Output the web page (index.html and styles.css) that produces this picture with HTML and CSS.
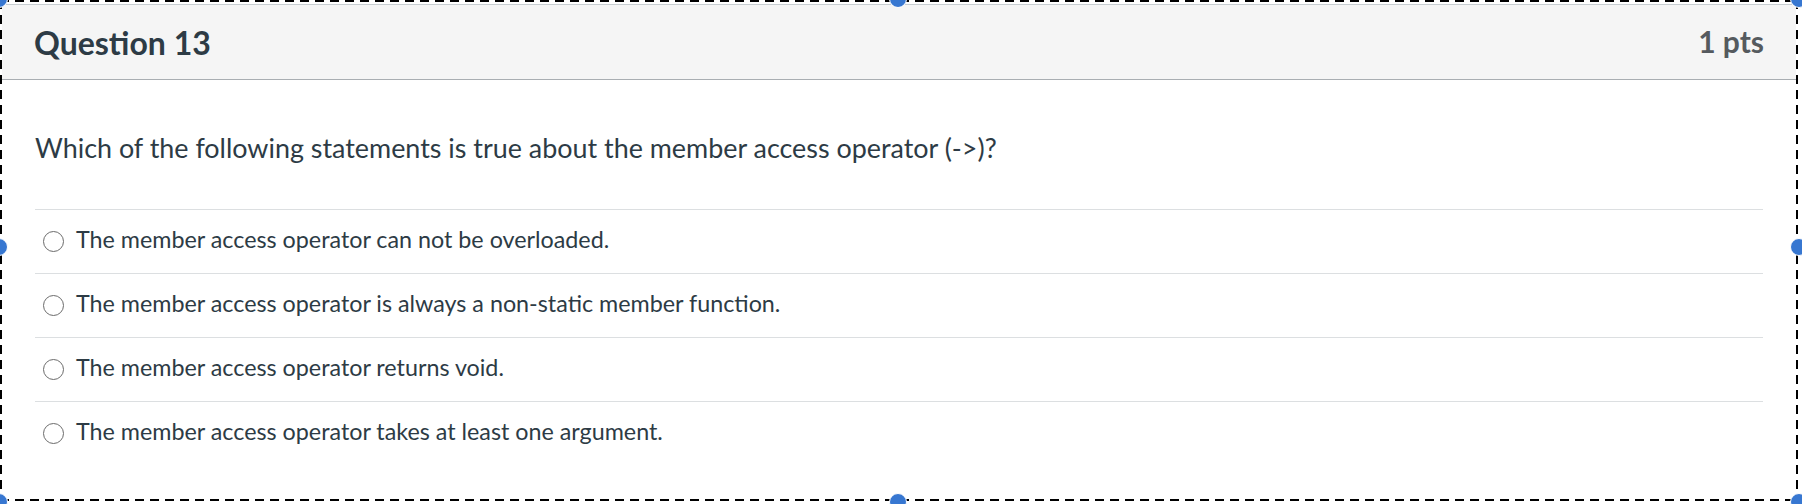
FILE: index.html
```html
<!DOCTYPE html>
<html>
<head>
<meta charset="utf-8">
<link rel="stylesheet" href="styles.css">
</head>
<body>
<div class="frame">
  <div class="question">
    <div class="header">
      <h2 class="title">Question 13</h2>
      <span class="pts">1 pts</span>
    </div>
    <div class="content">
      <p class="text">Which of the following statements is true about the member access operator (-&gt;)?</p>
      <ul class="answers">
        <li class="answer"><span class="radio"></span><span class="label">The member access operator can not be overloaded.</span></li>
        <li class="answer"><span class="radio"></span><span class="label">The member access operator is always a non-static member function.</span></li>
        <li class="answer"><span class="radio"></span><span class="label">The member access operator returns void.</span></li>
        <li class="answer"><span class="radio"></span><span class="label">The member access operator takes at least one argument.</span></li>
      </ul>
    </div>
  </div>
  <span class="handle h-tl"></span>
  <span class="handle h-tc"></span>
  <span class="handle h-tr"></span>
  <span class="handle h-ml"></span>
  <span class="handle h-mr"></span>
  <span class="handle h-bl"></span>
  <span class="handle h-bc"></span>
  <span class="handle h-br"></span>
</div>
</body>
</html>
```

FILE: styles.css
```css
html, body {
  margin: 0;
  padding: 0;
  background: #fff;
}
body {
  font-family: Lato, "Open Sans", sans-serif;
  color: #2d3b45;
  width: 1802px;
  height: 504px;
  overflow: hidden;
}
.frame {
  position: relative;
  box-sizing: border-box;
  width: 1798px;
  height: 501px;
  padding: 4px 2px 2px 2px;
  background-image:
    linear-gradient(to right, #000 9px, transparent 9px),
    linear-gradient(to right, #000 9px, transparent 9px),
    linear-gradient(to bottom, #000 9px, transparent 9px),
    linear-gradient(to bottom, #000 9px, transparent 9px);
  background-size: 15px 2px, 15px 2px, 2px 15px, 2px 15px;
  background-repeat: repeat-x, repeat-x, repeat-y, repeat-y;
  background-position: 0 0, 0 100%, 0 0, 100% 0;
}
.question {
  border-top: 1px solid #c7cdd1;
}
.header {
  display: flex;
  align-items: center;
  justify-content: space-between;
  box-sizing: border-box;
  height: 75px;
  background: #f5f5f5;
  border-bottom: 1px solid #a9aeb2;
  padding: 0 32px 0 32px;
}
.title {
  margin: 0;
  font-size: 32px;
  font-weight: 700;
  color: #2d3b45;
}
.pts {
  font-size: 30px;
  font-weight: 700;
  color: #555a5e;
  margin-top: -3px;
}
.content {
  padding: 52px 33px 0 33px;
}
.text {
  margin: 0 0 45px 0;
  font-size: 26.9px;
  line-height: 32px;
}
.answers {
  list-style: none;
  margin: 0;
  padding: 0;
}
.answer {
  display: flex;
  align-items: flex-start;
  box-sizing: border-box;
  height: 64px;
  border-top: 1px solid #dcdfe1;
  padding-top: 15px;
}
.radio {
  box-sizing: border-box;
  width: 21px;
  height: 21px;
  border: 1.5px solid #6b6b6b;
  border-radius: 50%;
  margin: 6px 12px 0 8px;
  flex: none;
}
.label {
  font-size: 23.3px;
  line-height: 28px;
}
.handle {
  position: absolute;
  width: 16px;
  height: 16px;
  border-radius: 50%;
  background: #3777d1;
  border: 1px solid #fff;
}
.h-tl { left: -10px; top: -10px; }
.h-tc { left: 889px; top: -10px; }
.h-tr { right: -10px; top: -10px; }
.h-ml { left: -10px; top: 238px; }
.h-mr { right: -10px; top: 238px; }
.h-bl { left: -10px; bottom: -10px; }
.h-bc { left: 889px; bottom: -10px; }
.h-br { right: -10px; bottom: -10px; }
```
